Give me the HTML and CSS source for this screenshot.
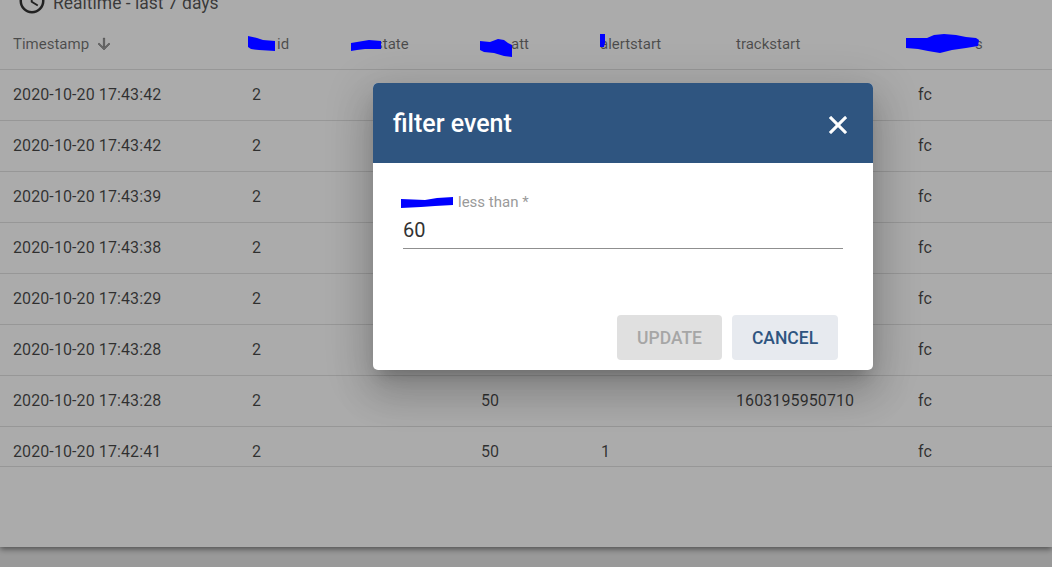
FILE: index.html
```html
<!DOCTYPE html>
<html>

<head>
    <title>Events</title>
    <meta charset="utf-8">
    <link rel="stylesheet" href="styles.css">
</head>

<body>
    <div class="card">
        <div class="range">
            <svg class="range-icon" viewBox="0 0 24 24"><path d="M11.99 2C6.47 2 2 6.48 2 12s4.47 10 9.99 10C17.52 22 22 17.52 22 12S17.52 2 11.99 2zM12 20c-4.42 0-8-3.58-8-8s3.58-8 8-8 8 3.58 8 8-3.58 8-8 8zM12.5 7H11v6l5.25 3.15.75-1.23-4.5-2.67z"/></svg>
            <span class="range-text">Realtime - last 7 days</span>
        </div>
        <div class="row head">
            <div class="cell">Timestamp
                <svg class="sort-icon" viewBox="0 0 24 24"><path d="M20 12l-1.41-1.41L13 16.17V4h-2v12.17l-5.58-5.59L4 12l8 8 8-8z"/></svg>
            </div>
            <div class="cell">
                <svg class="mask mask-id" viewBox="0 0 27 15"><path d="M0 0 L9 2 L15 4 L27 5 L27 15 L11 14 L3 13 L0 11 Z"/></svg>id
            </div>
            <div class="cell">
                <svg class="mask mask-state" viewBox="0 0 30 11"><path d="M0 3 L12 1 L18 0 L30 1 L30 9 L14 9 L6 10 L0 11 Z"/></svg>state
            </div>
            <div class="cell">
                <svg class="mask mask-batt" viewBox="0 0 32 18"><path d="M0 2 L10 3 L18 0 L24 1 L28 4 L32 6 L32 18 L24 17 L14 14 L4 13 L0 11 Z"/></svg>att
            </div>
            <div class="cell">
                <svg class="mask mask-alert" viewBox="0 0 5 13"><path d="M0 0 H5 V9 L4 13 H0 Z"/></svg>alertstart
            </div>
            <div class="cell">trackstart</div>
            <div class="cell">
                <svg class="mask mask-last" viewBox="0 0 76 19"><path d="M0 4 L21 4 L28 1 L38 0 L50 1 L60 3 L70 4 L73 6 L72 12 L60 14 L46 16 L34 19 L22 17 L12 15 L0 14 Z"/></svg>s
            </div>
        </div>
        <div class="row"><div class="cell">2020-10-20 17:43:42</div><div class="cell">2</div><div class="cell"></div><div class="cell">50</div><div class="cell"></div><div class="cell"></div><div class="cell">fc</div></div>
        <div class="row"><div class="cell">2020-10-20 17:43:42</div><div class="cell">2</div><div class="cell"></div><div class="cell">50</div><div class="cell"></div><div class="cell"></div><div class="cell">fc</div></div>
        <div class="row"><div class="cell">2020-10-20 17:43:39</div><div class="cell">2</div><div class="cell"></div><div class="cell">50</div><div class="cell"></div><div class="cell"></div><div class="cell">fc</div></div>
        <div class="row"><div class="cell">2020-10-20 17:43:38</div><div class="cell">2</div><div class="cell"></div><div class="cell">50</div><div class="cell"></div><div class="cell"></div><div class="cell">fc</div></div>
        <div class="row"><div class="cell">2020-10-20 17:43:29</div><div class="cell">2</div><div class="cell"></div><div class="cell">50</div><div class="cell"></div><div class="cell"></div><div class="cell">fc</div></div>
        <div class="row"><div class="cell">2020-10-20 17:43:28</div><div class="cell">2</div><div class="cell"></div><div class="cell">50</div><div class="cell"></div><div class="cell"></div><div class="cell">fc</div></div>
        <div class="row"><div class="cell">2020-10-20 17:43:28</div><div class="cell">2</div><div class="cell"></div><div class="cell">50</div><div class="cell"></div><div class="cell">1603195950710</div><div class="cell">fc</div></div>
        <div class="row row-cut"><div class="cell">2020-10-20 17:42:41</div><div class="cell">2</div><div class="cell"></div><div class="cell">50</div><div class="cell">1</div><div class="cell"></div><div class="cell">fc</div></div>
    </div>

    <div class="backdrop"></div>

    <div class="dialog">
        <div class="dialog-head">
            <span class="dialog-title">filter event</span>
            <svg class="close-icon" viewBox="0 0 24 24"><path d="M19 6.41L17.59 5 12 10.59 6.41 5 5 6.41 10.59 12 5 17.59 6.41 19 12 13.41 17.59 19 19 17.59 13.41 12z"/></svg>
        </div>
        <div class="dialog-body">
            <div class="field">
                <label class="field-label">
                    <svg class="mask mask-label" viewBox="0 0 52 11"><path d="M0 2 L24 3 L36 1 L52 0 L52 8 L34 9 L20 10 L0 11 Z"/></svg>less than *
                </label>
                <div class="field-value">60</div>
            </div>
            <div class="actions">
                <button class="btn btn-off">UPDATE</button>
                <button class="btn btn-cancel">CANCEL</button>
            </div>
        </div>
    </div>
</body>

</html>
```
FILE: styles.css
```css
* {
    box-sizing: border-box;
}

html,
body {
    height: 100%;
}

body {
    margin: 0;
    overflow: hidden;
    background-color: #e5e5e5;
    font-family: Roboto, "Liberation Sans", sans-serif;
    color: rgba(0, 0, 0, 0.72);
}

.card {
    height: 547px;
    background-color: #fff;
    box-shadow: 0 2px 6px rgba(0, 0, 0, 0.5);
    overflow: hidden;
}

.range {
    display: flex;
    align-items: center;
    gap: 6px;
    height: 30px;
    margin-top: -14px;
    margin-bottom: 3px;
    padding-left: 17px;
    font-size: 17.5px;
    color: rgba(0, 0, 0, 0.68);
}

.range-text {
    margin-top: 4px;
}

.range-icon {
    width: 30px;
    height: 30px;
    fill: #333;
}

.row {
    display: grid;
    grid-template-columns: 239px 100px 129px 120px 135px 182px 1fr;
    align-items: center;
    height: 51px;
    padding: 0 0 2px 13px;
    border-bottom: 1px solid #e2e2e2;
    font-size: 16px;
    letter-spacing: 0.1px;
}

.head {
    padding-bottom: 0;
    font-size: 15px;
    letter-spacing: 0;
    color: rgba(0, 0, 0, 0.56);
}

.row-cut {
    height: 40px;
    align-items: start;
    padding: 15px 0 0 13px;
}

.cell {
    display: flex;
    align-items: center;
    white-space: nowrap;
}

.sort-icon {
    width: 18px;
    height: 18px;
    margin-left: 6px;
    fill: rgba(0, 0, 0, 0.4);
    stroke: rgba(0, 0, 0, 0.4);
    stroke-width: 0.8;
}

.mask {
    flex: none;
    position: relative;
    z-index: 2;
    fill: #0000ff;
}

.mask-id {
    width: 27px;
    height: 15px;
    margin: -1px 2px 0 -4px;
}

.mask-state {
    width: 30px;
    height: 11px;
    margin: 3px -6px 0 -1px;
}

.mask-batt {
    width: 32px;
    height: 18px;
    margin: 8px -1px 0 -1px;
}

.mask-alert {
    width: 5px;
    height: 13px;
    margin: -7px -5px 0 -1px;
}

.mask-last {
    width: 76px;
    height: 19px;
    margin: -1px -7px 0 -12px;
}

.backdrop {
    position: absolute;
    inset: 0;
    z-index: 1;
    background-color: rgba(0, 0, 0, 0.33);
}

.dialog {
    position: absolute;
    top: 83px;
    left: 373px;
    z-index: 3;
    width: 500px;
    height: 287px;
    border-radius: 5px;
    background-color: #fff;
    box-shadow: 0 11px 15px -7px rgba(0, 0, 0, 0.2), 0 24px 38px 3px rgba(0, 0, 0, 0.14), 0 9px 46px 8px rgba(0, 0, 0, 0.12);
}

.dialog-head {
    display: flex;
    align-items: center;
    justify-content: space-between;
    height: 80px;
    padding: 0 20px;
    border-radius: 5px 5px 0 0;
    background-color: #2f5580;
    color: #fff;
}

.dialog-title {
    font-size: 25px;
    font-weight: 500;
}

.close-icon {
    width: 30px;
    height: 30px;
    margin-top: 4px;
    fill: #fff;
    stroke: #fff;
    stroke-width: 0.6;
}

.dialog-body {
    display: flex;
    flex-direction: column;
    height: 207px;
    padding: 30px 30px 10px;
}

.field {
    height: 56px;
    border-bottom: 1px solid #8f8f8f;
}

.field-label {
    display: flex;
    align-items: center;
    height: 18px;
    font-size: 15px;
    color: #9a9a9a;
}

.mask-label {
    width: 52px;
    height: 11px;
    margin: 0 5px 0 -2px;
}

.field-value {
    margin-top: 7px;
    font-size: 20px;
    line-height: 24px;
    color: #333;
}

.actions {
    display: flex;
    justify-content: flex-end;
    gap: 10px;
    margin-top: auto;
    padding-right: 5px;
}

.btn {
    width: 105px;
    height: 45px;
    padding: 0;
    border: none;
    border-radius: 4px;
    font-family: inherit;
    font-size: 17.5px;
    font-weight: 500;
}

.btn-off {
    background-color: #e0e0e0;
    color: #a6a6a6;
}

.btn-cancel {
    width: 106px;
    background-color: #e7eaef;
    color: #2f5580;
}
```
